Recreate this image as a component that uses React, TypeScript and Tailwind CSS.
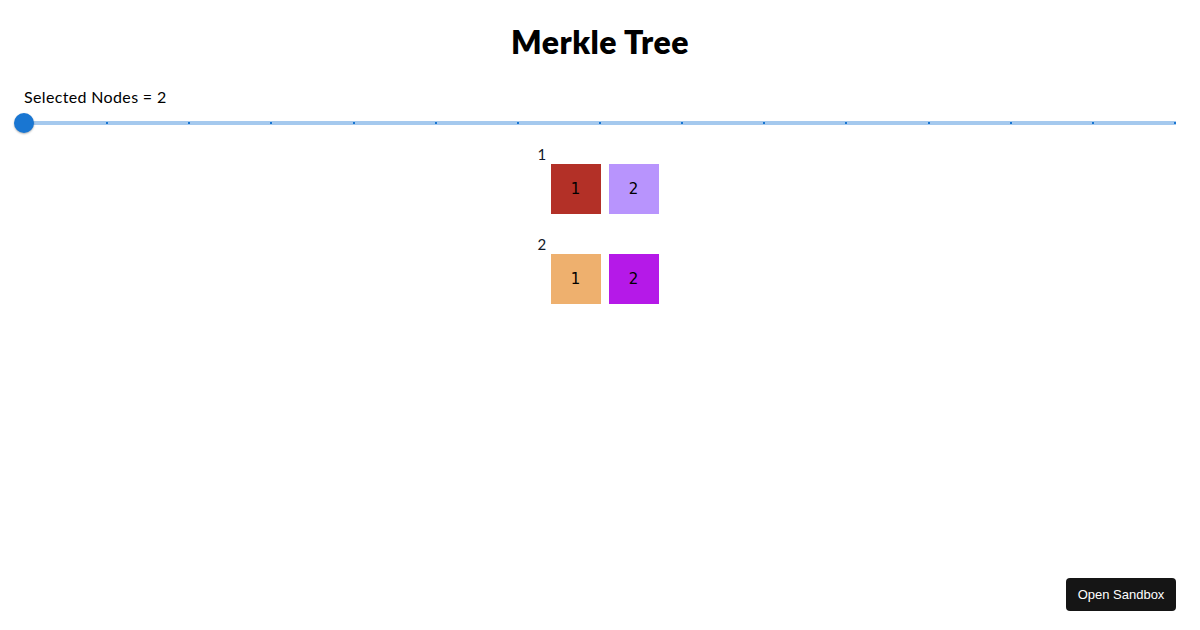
const levels = [
  { id: 1, nodes: [{ label: "1", color: "bg-[#b33027]" }, { label: "2", color: "bg-[#b894fd]" }] },
  { id: 2, nodes: [{ label: "1", color: "bg-[#eeb06e]" }, { label: "2", color: "bg-[#b519e8]" }] },
];

const TICKS = 15;

export default function App() {
  return (
    <div className="relative w-[1200px] h-[630px] bg-white text-black overflow-hidden font-['Lato','Noto_Sans',sans-serif]">
      <h1 className="pt-[22px] text-center text-[32px] leading-[40px] font-extrabold tracking-[0.5px]">
        Merkle Tree
      </h1>

      {/* Slider */}
      <div className="px-6 mt-[23px]">
        <div className="text-[16px] leading-[24px] tracking-[0.35px]">Selected Nodes = 2</div>
        <div className="relative h-[20px] mt-[4px]">
          <div className="absolute left-0 right-0 top-[8px] h-[4px] bg-[#a5c9ee] flex items-center justify-between">
            {Array.from({ length: TICKS }).map((_, i) => (
              <span key={i} className="w-[2px] h-[2px] bg-[#1976d2]" />
            ))}
          </div>
          <div className="absolute left-[-10px] top-0 w-[20px] h-[20px] rounded-full bg-[#1976d2] shadow-[0_1px_2px_rgba(0,0,0,0.3)]" />
        </div>
      </div>

      {/* Levels */}
      <div className="flex justify-center mt-[11px] pr-[4px]">
        <div className="flex flex-col gap-[20px]">
          {levels.map((lvl) => (
            <div key={lvl.id}>
              <div className="text-[15px] leading-[20px] text-[#111827]">{lvl.id}</div>
              <div className="flex gap-[8px] pl-[13px]">
                {lvl.nodes.map((n) => (
                  <div
                    key={n.label}
                    className={`w-[50px] h-[50px] ${n.color} flex items-center justify-center text-[15px] font-['DejaVu_Sans',sans-serif]`}
                  >
                    {n.label}
                  </div>
                ))}
              </div>
            </div>
          ))}
        </div>
      </div>

      <button className="absolute right-[24px] bottom-[19px] w-[110px] h-[33px] rounded-[4px] bg-[#151515] text-white text-[13px] font-['Liberation_Sans',Arial,sans-serif]">
        Open Sandbox
      </button>
    </div>
  );
}
